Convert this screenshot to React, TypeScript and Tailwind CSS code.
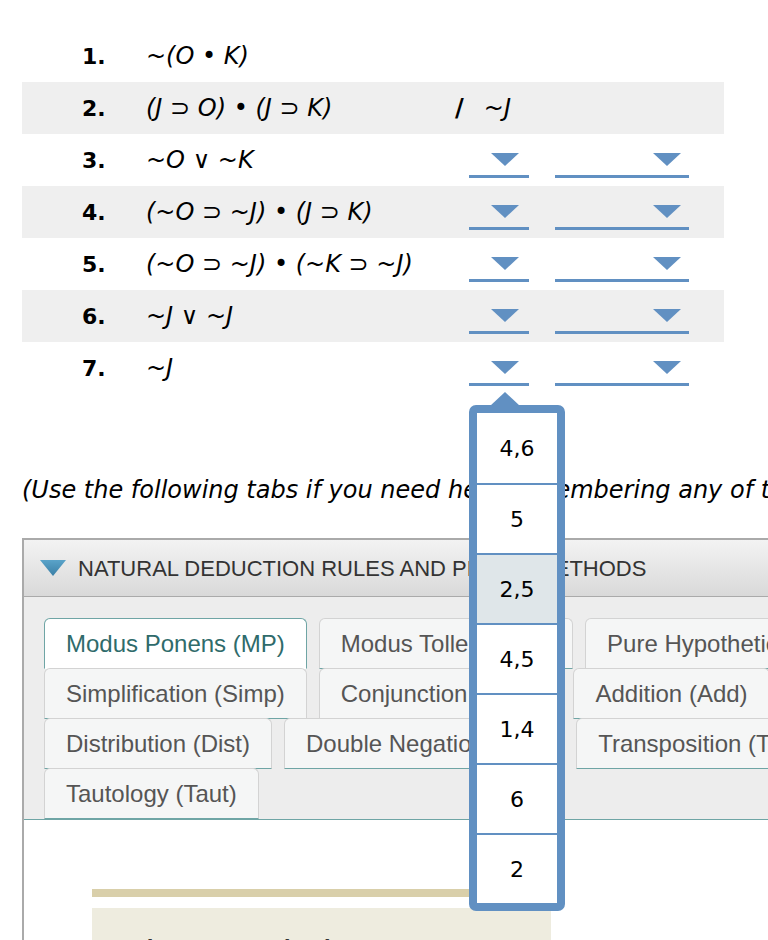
import React from "react";

const sans = "font-['DejaVu_Sans',Verdana,sans-serif]";
const arial = "font-['Liberation_Sans',Arial,sans-serif]";

type Row = { n: string; f: string; premise?: string; select?: boolean };

const rows: Row[] = [
  { n: "1.", f: "~(O • K)" },
  { n: "2.", f: "(J ⊃ O) • (J ⊃ K)", premise: "~J" },
  { n: "3.", f: "~O ∨ ~K", select: true },
  { n: "4.", f: "(~O ⊃ ~J) • (J ⊃ K)", select: true },
  { n: "5.", f: "(~O ⊃ ~J) • (~K ⊃ ~J)", select: true },
  { n: "6.", f: "~J ∨ ~J", select: true },
  { n: "7.", f: "~J", select: true },
];

const options = ["4,6", "5", "2,5", "4,5", "1,4", "6", "2"];

const tabRows = [
  ["Modus Ponens (MP)", "Modus Tollens (MT)", "Pure Hypothetical Syllogism (HS)"],
  ["Simplification (Simp)", "Conjunction (Conj)", "Addition (Add)", "Disjunctive Syllogism (DS)"],
  ["Distribution (Dist)", "Double Negation (DN)", "Transposition (Trans)", "Material Implication (Impl)"],
  ["Tautology (Taut)"],
];

function Caret() {
  return (
    <svg width="28" height="13" viewBox="0 0 28 13">
      <polygon points="0,0 28,0 14,13" fill="#6190c2" />
    </svg>
  );
}

function Select({ width, caretLeft }: { width: number; caretLeft: number }) {
  return (
    <div className="relative h-full shrink-0" style={{ width }}>
      <div className="absolute top-[19px]" style={{ left: caretLeft }}>
        <Caret />
      </div>
      <div className="absolute bottom-[8px] left-0 right-0 h-[3px] bg-[#6190c2]" />
    </div>
  );
}

export default function App() {
  return (
    <div className={`relative w-[768px] h-[940px] overflow-hidden bg-white text-black ${sans}`}>
      {/* Proof lines */}
      <div className="ml-[22px] mt-[30px] w-[702px]">
        {rows.map((r, i) => (
          <div
            key={r.n}
            className={`flex h-[52px] items-center pl-[60px] ${i % 2 === 1 ? "bg-[#efefef]" : ""}`}
          >
            <span className="w-[64px] shrink-0 text-[22px] font-bold">{r.n}</span>
            {r.premise ? (
              <>
                <span className="w-[309px] shrink-0 text-[24px] italic">{r.f}</span>
                <span className="flex items-center gap-[20px] text-[24px]">
                  <b>/</b>
                  <i>{r.premise}</i>
                </span>
              </>
            ) : (
              <span className="w-[323px] shrink-0 text-[24px] italic">{r.f}</span>
            )}
            {r.select && (
              <div className="flex h-full gap-[26px]">
                <Select width={60} caretLeft={22} />
                <Select width={134} caretLeft={98} />
              </div>
            )}
          </div>
        ))}
      </div>

      <p className="mt-[84px] ml-[22px] whitespace-nowrap text-[24px] leading-[24px] italic">
        (Use the following tabs if you need help remembering any of these rules and methods.)
      </p>

      {/* Accordion */}
      <div className={`mt-[36px] ml-[22px] w-[1100px] border-2 border-[#aaaaaa] ${arial}`}>
        <div className="flex h-[57px] items-center gap-[12px] border-b border-[#aaaaaa] bg-gradient-to-b from-[#f3f3f3] to-[#d9d9d9] pl-[16px]">
          <svg width="26" height="16" viewBox="0 0 26 16">
            <defs>
              <linearGradient id="tri" x1="0" y1="0" x2="0" y2="1">
                <stop offset="0" stopColor="#5aa3c9" />
                <stop offset="1" stopColor="#3a7fa6" />
              </linearGradient>
            </defs>
            <polygon points="0,0 26,0 13,16" fill="url(#tri)" />
          </svg>
          <span className="text-[22px] text-[#333]">NATURAL DEDUCTION RULES AND PROOF METHODS</span>
        </div>

        <div className="bg-[#ededed] pt-[21px] pl-[20px]">
          {tabRows.map((row, ri) => (
            <div key={ri} className={`flex gap-[12px] ${ri > 0 ? "-mt-px" : ""}`}>
              {row.map((t) => {
                const active = t === "Modus Ponens (MP)";
                return (
                  <div
                    key={t}
                    className={`flex h-[51px] shrink-0 items-center whitespace-nowrap rounded-t-[6px] border px-[21px] text-[24px] ${
                      active
                        ? "border-[#6fa5a5] border-b-white bg-white text-[#2f6b6b]"
                        : "border-[#d3d3d3] border-b-[#6fa5a5] bg-[#f5f6f6] text-[#555]"
                    }`}
                  >
                    {t}
                  </div>
                );
              })}
            </div>
          ))}
        </div>

        <div className="h-[200px] border-t border-[#6fa5a5] bg-white pt-[69px] pl-[68px]">
          <div className="h-[8px] w-[456px] bg-[#d9cfaa]" />
          <div className="mt-[11px] h-[100px] w-[459px] bg-[#eeecdf] pt-[23px] pl-[12px]">
            <span className="text-[24px] font-bold text-[#333]">Modus Ponens (MP)</span>
          </div>
        </div>
      </div>

      {/* Open dropdown list */}
      <div className="absolute left-[469px] top-[392px]">
        <svg width="30" height="14" viewBox="0 0 30 14" className="ml-[21px] block">
          <polygon points="0,14 15,0 30,14" fill="#6190c2" />
        </svg>
        <div className="-mt-px w-[96px] overflow-hidden rounded-[7px] border-[8px] border-[#6190c2] bg-white">
          {options.map((o, i) => (
            <div
              key={o}
              className={`flex h-[70px] items-center justify-center text-[22px] ${
                i > 0 ? "border-t-2 border-[#6190c2]" : ""
              } ${o === "2,5" ? "bg-[#dfe6e9]" : ""}`}
            >
              {o}
            </div>
          ))}
        </div>
      </div>
    </div>
  );
}
